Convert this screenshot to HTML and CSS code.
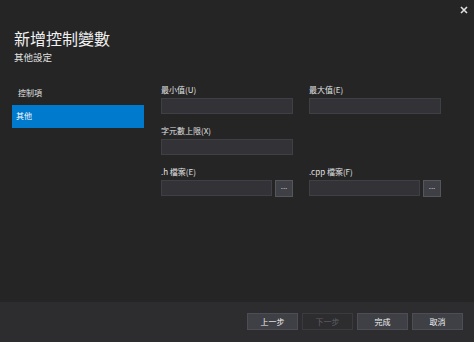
FILE: index.html
```html
<!DOCTYPE html>
<html lang="zh-Hant">
<head>
<meta charset="utf-8">
<link rel="stylesheet" href="styles.css">
</head>
<body>
<div class="dialog">
  <button class="close" aria-label="關閉">
    <svg width="8" height="8" viewBox="0 0 8 8"><path d="M1 1L7 7M7 1L1 7" stroke="#e0e0e0" stroke-width="1.6"/></svg>
  </button>
  <header class="header">
    <h1 class="title">新增控制變數</h1>
    <div class="subtitle">其他設定</div>
  </header>
  <div class="main">
    <nav class="nav">
      <div class="nav-item">控制項</div>
      <div class="nav-item selected">其他</div>
    </nav>
    <div class="form">
      <div class="field">
        <label class="label">最小值(U)</label>
        <input class="input" type="text">
      </div>
      <div class="field">
        <label class="label">最大值(E)</label>
        <input class="input" type="text">
      </div>
      <div class="field">
        <label class="label">字元數上限(X)</label>
        <input class="input" type="text">
      </div>
      <div class="field empty"></div>
      <div class="field">
        <label class="label">.h 檔案(E)</label>
        <div class="file-row">
          <input class="input" type="text">
          <button class="browse">...</button>
        </div>
      </div>
      <div class="field">
        <label class="label">.cpp 檔案(F)</label>
        <div class="file-row">
          <input class="input" type="text">
          <button class="browse">...</button>
        </div>
      </div>
    </div>
  </div>
  <footer class="footer">
    <button class="btn">上一步</button>
    <button class="btn disabled" disabled>下一步</button>
    <button class="btn">完成</button>
    <button class="btn">取消</button>
  </footer>
</div>
</body>
</html>
```
FILE: styles.css
```css
* { box-sizing: border-box; }
html, body {
  margin: 0;
  padding: 0;
  background: #252526;
}
body {
  font-family: "Noto Sans CJK TC", "Noto Sans", sans-serif;
  color: #e8e8e8;
}
.dialog {
  position: relative;
  width: 474px;
  height: 342px;
  display: flex;
  flex-direction: column;
  background: #252526;
}
.close {
  position: absolute;
  top: 3px;
  right: 3px;
  width: 14px;
  height: 14px;
  padding: 0;
  border: none;
  background: transparent;
  display: flex;
  align-items: center;
  justify-content: center;
}
.header {
  height: 82px;
  padding: 29px 0 0 14px;
}
.title {
  margin: 0;
  font-size: 16px;
  line-height: 18px;
  font-weight: normal;
  color: #f1f1f1;
}
.subtitle {
  margin-top: 4px;
  font-size: 9.5px;
  line-height: 12px;
  color: #e0e0e0;
}
.main {
  flex: 1;
  display: flex;
}
.nav {
  width: 132px;
  margin-left: 12px;
  display: flex;
  flex-direction: column;
}
.nav-item {
  height: 23px;
  line-height: 22px;
  padding-left: 6px;
  font-size: 8px;
  color: #e0e0e0;
}
.nav-item.selected {
  background: #007acc;
  color: #ffffff;
  padding-left: 4px;
}
.form {
  margin-left: 17px;
  padding-top: 3px;
  display: grid;
  grid-template-columns: 132px 132px;
  column-gap: 16px;
  row-gap: 12px;
  align-content: start;
}
.field {
  display: flex;
  flex-direction: column;
  height: 29px;
}
.label {
  font-size: 8px;
  line-height: 10px;
  height: 10px;
  margin-bottom: 3px;
  color: #e0e0e0;
}
.input {
  width: 100%;
  height: 16px;
  margin: 0;
  padding: 0 3px;
  background: #333337;
  border: 1px solid #3f3f46;
  color: #f1f1f1;
  font-family: inherit;
  font-size: 8px;
  outline: none;
}
.file-row {
  display: flex;
  gap: 3px;
}
.file-row .input {
  flex: 1;
  width: auto;
  min-width: 0;
}
.browse {
  width: 18px;
  height: 17px;
  margin: 0;
  padding: 0 0 4px;
  background: #3f3f46;
  border: 1px solid #55555c;
  color: #f1f1f1;
  font-family: "DejaVu Sans", sans-serif;
  font-size: 7px;
  line-height: 10px;
}
.footer {
  height: 40px;
  background: #2d2d30;
  display: flex;
  justify-content: flex-end;
  align-items: flex-start;
  gap: 4px;
  padding: 11px 11px 0 0;
}
.btn {
  width: 51px;
  height: 17px;
  margin: 0;
  padding: 0;
  background: #3f3f46;
  border: 1px solid #4d4d55;
  color: #f1f1f1;
  font-family: inherit;
  font-size: 8px;
  line-height: 15px;
}
.btn.disabled {
  background: #2d2d30;
  border-color: #3a3a40;
  color: #5f5f63;
}
```
